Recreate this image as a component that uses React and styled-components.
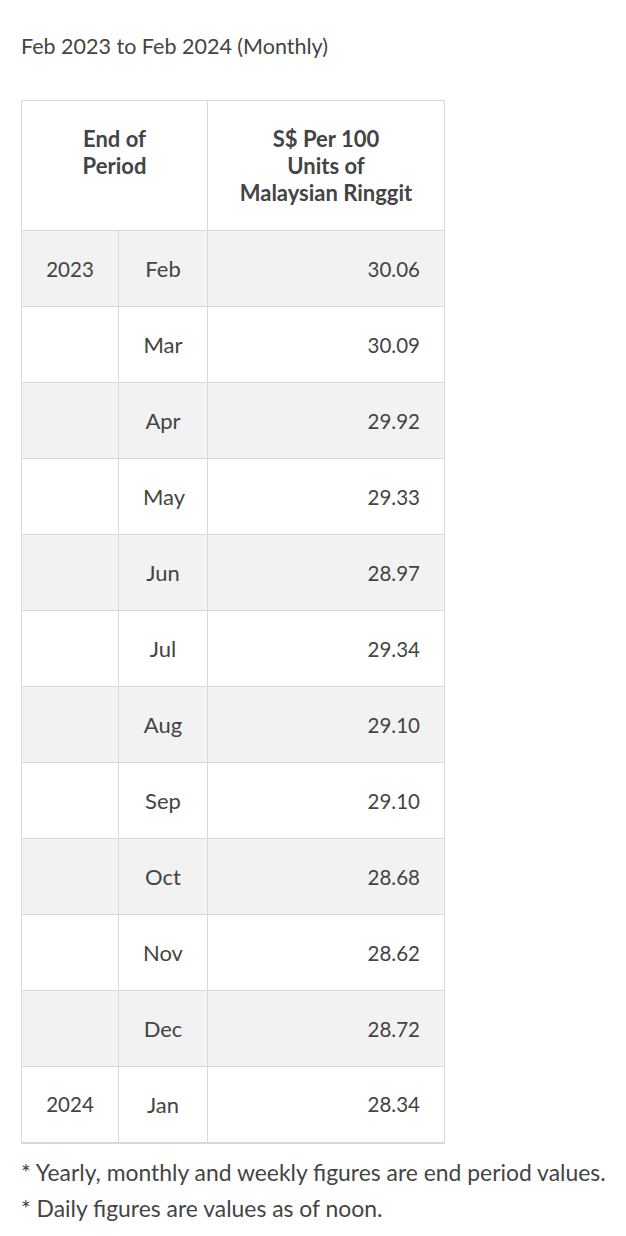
import React from "react";
import styled, { createGlobalStyle } from "styled-components";

const GlobalStyle = createGlobalStyle`
  body {
    margin: 0;
    background: #fff;
    font-family: "Lato", "Open Sans", sans-serif;
    color: #444;
  }
`;

const rows = [
  ["2023", "Feb", "30.06"],
  ["", "Mar", "30.09"],
  ["", "Apr", "29.92"],
  ["", "May", "29.33"],
  ["", "Jun", "28.97"],
  ["", "Jul", "29.34"],
  ["", "Aug", "29.10"],
  ["", "Sep", "29.10"],
  ["", "Oct", "28.68"],
  ["", "Nov", "28.62"],
  ["", "Dec", "28.72"],
  ["2024", "Jan", "28.34"],
];

function App() {
  return (
    <Page>
      <GlobalStyle />
      <Title>Feb 2023 to Feb 2024 (Monthly)</Title>
      <Table>
        <colgroup>
          <col style={{ width: 97 }} />
          <col style={{ width: 89 }} />
          <col style={{ width: 237 }} />
        </colgroup>
        <thead>
          <tr>
            <HeadCell colSpan={2}>
              End of
              <br />
              Period
            </HeadCell>
            <HeadCell>
              S$ Per 100
              <br />
              Units of
              <br />
              Malaysian Ringgit
            </HeadCell>
          </tr>
        </thead>
        <tbody>
          {rows.map(([year, month, value], i) => (
            <Row key={month + year} $striped={i % 2 === 0}>
              <Cell $numeric>{year}</Cell>
              <Cell>{month}</Cell>
              <Cell $numeric $align="right">
                {value}
              </Cell>
            </Row>
          ))}
        </tbody>
      </Table>
      <Notes>
        <p>* Yearly, monthly and weekly figures are end period values.</p>
        <p>* Daily figures are values as of noon.</p>
      </Notes>
    </Page>
  );
}

export default App;

const Page = styled.div`
  padding: 31px 21px 20px;
  width: 626px;
  box-sizing: border-box;
`;

const Title = styled.div`
  font-size: 21.5px;
  line-height: 30px;
  color: #444;
  margin-bottom: 39px;
`;

const Table = styled.table`
  border-collapse: collapse;
  table-layout: fixed;
  width: 424px;
  border-bottom: 2px solid #d9d9d9;
`;

const HeadCell = styled.th`
  border: 1px solid #d9d9d9;
  height: 129px;
  box-sizing: border-box;
  padding: 24px 10px;
  font-size: 22px;
  line-height: 27px;
  font-weight: 700;
  color: #444;
  text-align: center;
  vertical-align: top;
`;

const Row = styled.tr`
  background: ${(p) => (p.$striped ? "#f2f2f2" : "#fff")};
`;

const Cell = styled.td`
  border: 1px solid #d9d9d9;
  height: 76px;
  box-sizing: border-box;
  padding: 0 24px;
  font-size: ${(p) => (p.$numeric ? "20.5px" : "22px")};
  color: #444;
  text-align: ${(p) => p.$align || "center"};
  vertical-align: middle;
`;

const Notes = styled.div`
  margin-top: 10px;
  font-size: 22.9px;
  color: #444;
  white-space: nowrap;

  p {
    margin: 0;
    line-height: 36px;
  }
`;
